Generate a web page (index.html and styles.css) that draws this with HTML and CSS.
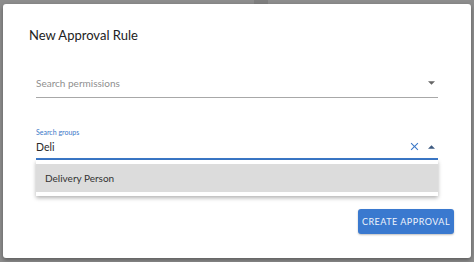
FILE: index.html
```html
<!DOCTYPE html>
<html>
<head>
<meta charset="utf-8">
<link rel="stylesheet" href="styles.css">
</head>
<body>
<div class="backdrop">
  <div class="bg-strip"></div>
  <div class="dialog">
    <h2 class="title">New Approval Rule</h2>
    <div class="content">
      <div class="field">
        <div class="input">
          <span class="placeholder">Search permissions</span>
          <span class="adorn">
            <svg class="arrow" viewBox="0 0 10 5" width="7" height="4"><path d="M0 0l5 5 5-5z" fill="#666"/></svg>
          </span>
        </div>
      </div>
      <div class="field focused">
        <label class="label">Search groups</label>
        <div class="input">
          <span class="value">Deli</span>
          <span class="adorn">
            <svg class="close" viewBox="0 0 24 24" width="13" height="13"><path d="M19 6.41 17.59 5 12 10.59 6.41 5 5 6.41 10.59 12 5 17.59 6.41 19 12 13.41 17.59 19 19 17.59 13.41 12z" fill="#3b78c8"/></svg>
            <svg class="arrow" viewBox="0 0 10 5" width="7" height="4"><path d="M0 5l5-5 5 5z" fill="#3d5a80"/></svg>
          </span>
        </div>
        <ul class="menu">
          <li class="option active">Delivery Person</li>
        </ul>
      </div>
    </div>
    <div class="actions">
      <button class="btn">CREATE APPROVAL</button>
    </div>
  </div>
</div>
</body>
</html>
```

FILE: styles.css
```css
* { box-sizing: border-box; }
html, body {
  margin: 0;
  padding: 0;
  width: 474px;
  height: 262px;
  overflow: hidden;
  background: #8d8d8d;
  font-family: Lato, "Open Sans", sans-serif;
}
.backdrop {
  position: relative;
  width: 474px;
  height: 262px;
  padding: 4px 3px 0 3px;
}
.bg-strip {
  position: absolute;
  left: 254px;
  top: 0;
  width: 14px;
  height: 4px;
  background: #7f7f7f;
}
.dialog {
  position: relative;
  width: 468px;
  height: 254px;
  background: #fff;
  border-radius: 3px;
  box-shadow: 0 2px 4px rgba(0,0,0,0.35);
  display: flex;
  flex-direction: column;
}
.title {
  margin: 0;
  padding: 23px 0 0 26px;
  font-size: 13px;
  line-height: 16px;
  font-weight: 400;
  color: #222;
}
.content {
  padding: 0 33px;
}
.field {
  position: relative;
  margin-top: 28px;
}
.field.focused {
  margin-top: 30px;
}
.input {
  display: flex;
  align-items: center;
  height: 27px;
  padding-bottom: 3px;
  border-bottom: 1px solid #a8a8a8;
}
.focused .input {
  height: 23px;
  padding-bottom: 2px;
  border-bottom: 2px solid #3b78c8;
}
.label {
  display: block;
  font-size: 7px;
  line-height: 9px;
  color: #3b78c8;
}
.placeholder {
  flex: 1;
  font-size: 10px;
  color: #8f8f8f;
}
.value {
  flex: 1;
  font-size: 10.5px;
  color: #2a2a2a;
}
.adorn {
  display: flex;
  align-items: center;
  gap: 7px;
  padding-right: 3px;
}
.adorn svg { display: block; }
.menu {
  position: absolute;
  left: 0;
  right: 0;
  top: 100%;
  margin: 0;
  padding: 4px 0;
  list-style: none;
  background: #fff;
  box-shadow: 0 2px 4px rgba(0,0,0,0.3);
  z-index: 2;
}
.option {
  height: 28px;
  display: flex;
  align-items: center;
  padding-left: 9px;
  font-size: 10px;
  color: #333;
}
.option.active { background: #dcdcdc; }
.actions {
  display: flex;
  justify-content: flex-end;
  padding-right: 17px;
  margin-top: 49px;
}
.btn {
  width: 96px;
  height: 25px;
  border: none;
  border-radius: 3px;
  background: #3a79cf;
  color: #eef3fb;
  font-family: Lato, "Open Sans", sans-serif;
  font-size: 9px;
  font-weight: 400;
  letter-spacing: 0.5px;
  padding: 0;
  box-shadow: 0 1px 2px rgba(0,0,0,0.25);
}
```
